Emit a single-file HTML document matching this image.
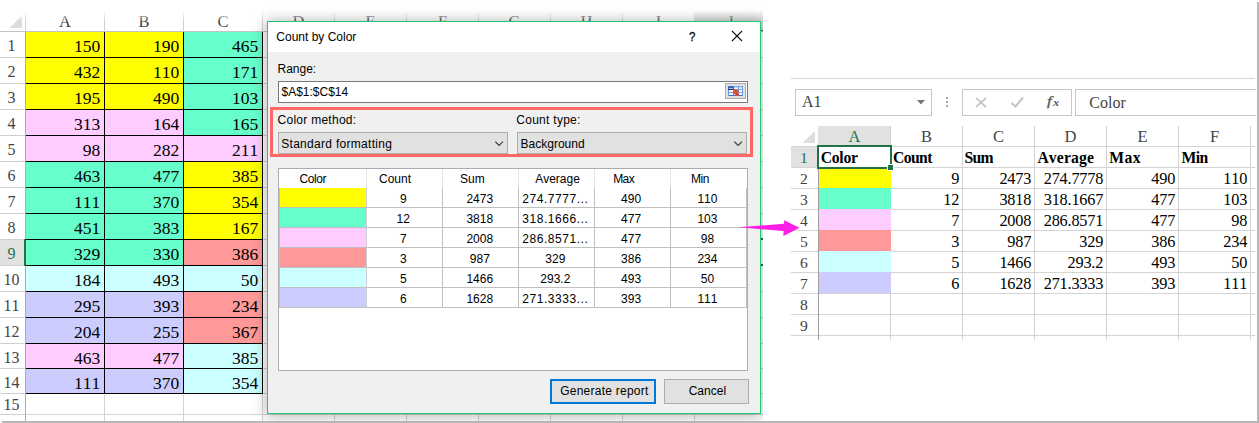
<!DOCTYPE html>
<html><head><meta charset="utf-8"><title>Count by Color</title>
<style>
html,body{margin:0;padding:0;background:#fff;}
body{width:1259px;height:423px;position:relative;overflow:hidden;}
#root{position:absolute;left:0;top:0;width:1259px;height:423px;overflow:hidden;background:#fff;}
#root div,#root span,#root svg,.abs{position:absolute;}
#root div{box-sizing:content-box;}
.se{font-family:"Liberation Serif",serif;white-space:nowrap;line-height:normal;font-kerning:none;}
.sa{font-family:"Liberation Sans",sans-serif;white-space:nowrap;line-height:normal;font-kerning:none;}
.se span,.sa span,.se i{position:static !important;}
#root .rel{position:relative !important;}
</style></head><body><div id="root">
<div class="abs" style="left:0;top:0;width:763px;height:421px;overflow:hidden">
<div style="left:695px;top:11px;width:68px;height:20px;background:#d7d7d7;"></div>
<div style="left:695px;top:30px;width:68px;height:2px;background:#217346;"></div>
<div style="left:25px;top:11px;width:1px;height:20px;background:#d0d0d0;"></div>
<div style="left:104px;top:11px;width:1px;height:20px;background:#d0d0d0;"></div>
<div style="left:183px;top:11px;width:1px;height:20px;background:#d0d0d0;"></div>
<div style="left:262px;top:11px;width:1px;height:20px;background:#d0d0d0;"></div>
<div style="left:334px;top:11px;width:1px;height:20px;background:#d0d0d0;"></div>
<div style="left:406px;top:11px;width:1px;height:20px;background:#d0d0d0;"></div>
<div style="left:478px;top:11px;width:1px;height:20px;background:#d0d0d0;"></div>
<div style="left:550px;top:11px;width:1px;height:20px;background:#d0d0d0;"></div>
<div style="left:622px;top:11px;width:1px;height:20px;background:#d0d0d0;"></div>
<div style="left:694px;top:11px;width:1px;height:20px;background:#d0d0d0;"></div>
<div style="left:0px;top:31px;width:763px;height:1px;background:#c4c4c4;"></div>
<div style="left:0px;top:57px;width:25px;height:1px;background:#d0d0d0;"></div>
<div style="left:0px;top:83px;width:25px;height:1px;background:#d0d0d0;"></div>
<div style="left:0px;top:109px;width:25px;height:1px;background:#d0d0d0;"></div>
<div style="left:0px;top:135px;width:25px;height:1px;background:#d0d0d0;"></div>
<div style="left:0px;top:161px;width:25px;height:1px;background:#d0d0d0;"></div>
<div style="left:0px;top:187px;width:25px;height:1px;background:#d0d0d0;"></div>
<div style="left:0px;top:213px;width:25px;height:1px;background:#d0d0d0;"></div>
<div style="left:0px;top:239px;width:25px;height:1px;background:#d0d0d0;"></div>
<div style="left:0px;top:265px;width:25px;height:1px;background:#d0d0d0;"></div>
<div style="left:0px;top:291px;width:25px;height:1px;background:#d0d0d0;"></div>
<div style="left:0px;top:317px;width:25px;height:1px;background:#d0d0d0;"></div>
<div style="left:0px;top:343px;width:25px;height:1px;background:#d0d0d0;"></div>
<div style="left:0px;top:368px;width:25px;height:1px;background:#d0d0d0;"></div>
<div style="left:0px;top:393px;width:25px;height:1px;background:#d0d0d0;"></div>
<div style="left:0px;top:414px;width:25px;height:1px;background:#d0d0d0;"></div>
<div style="left:25px;top:32px;width:1px;height:389px;background:#ababab;"></div>
<div style="left:26px;top:57px;width:737px;height:1px;background:#d4d4d4;"></div>
<div style="left:26px;top:83px;width:737px;height:1px;background:#d4d4d4;"></div>
<div style="left:26px;top:109px;width:737px;height:1px;background:#d4d4d4;"></div>
<div style="left:26px;top:135px;width:737px;height:1px;background:#d4d4d4;"></div>
<div style="left:26px;top:161px;width:737px;height:1px;background:#d4d4d4;"></div>
<div style="left:26px;top:187px;width:737px;height:1px;background:#d4d4d4;"></div>
<div style="left:26px;top:213px;width:737px;height:1px;background:#d4d4d4;"></div>
<div style="left:26px;top:239px;width:737px;height:1px;background:#d4d4d4;"></div>
<div style="left:26px;top:265px;width:737px;height:1px;background:#d4d4d4;"></div>
<div style="left:26px;top:291px;width:737px;height:1px;background:#d4d4d4;"></div>
<div style="left:26px;top:317px;width:737px;height:1px;background:#d4d4d4;"></div>
<div style="left:26px;top:343px;width:737px;height:1px;background:#d4d4d4;"></div>
<div style="left:26px;top:368px;width:737px;height:1px;background:#d4d4d4;"></div>
<div style="left:26px;top:393px;width:737px;height:1px;background:#d4d4d4;"></div>
<div style="left:26px;top:414px;width:737px;height:1px;background:#d4d4d4;"></div>
<div style="left:104px;top:32px;width:1px;height:389px;background:#d4d4d4;"></div>
<div style="left:183px;top:32px;width:1px;height:389px;background:#d4d4d4;"></div>
<div style="left:262px;top:32px;width:1px;height:389px;background:#d4d4d4;"></div>
<div style="left:334px;top:32px;width:1px;height:389px;background:#d4d4d4;"></div>
<div style="left:406px;top:32px;width:1px;height:389px;background:#d4d4d4;"></div>
<div style="left:478px;top:32px;width:1px;height:389px;background:#d4d4d4;"></div>
<div style="left:550px;top:32px;width:1px;height:389px;background:#d4d4d4;"></div>
<div style="left:622px;top:32px;width:1px;height:389px;background:#d4d4d4;"></div>
<div style="left:694px;top:32px;width:1px;height:389px;background:#d4d4d4;"></div>
<svg class="abs" style="left:9px;top:15px" width="14" height="14"><polygon points="13,0.5 13,13 0.5,13" fill="#dcdcdc"/></svg>
<div style="left:0px;top:240px;width:24px;height:25px;background:#e1e1e1;"></div>
<div style="left:24px;top:239px;width:2px;height:27px;background:#217346;"></div>
<span class="se" style="top:11.90px;font-size:16.5px;color:#444;left:-35.0px;width:200px;text-align:center;">A</span>
<span class="se" style="top:11.90px;font-size:16.5px;color:#444;left:44.0px;width:200px;text-align:center;">B</span>
<span class="se" style="top:11.90px;font-size:16.5px;color:#444;left:123.0px;width:200px;text-align:center;">C</span>
<span class="se" style="top:11.90px;font-size:16.5px;color:#444;left:198.5px;width:200px;text-align:center;">D</span>
<span class="se" style="top:11.90px;font-size:16.5px;color:#444;left:270.5px;width:200px;text-align:center;">E</span>
<span class="se" style="top:11.90px;font-size:16.5px;color:#444;left:342.5px;width:200px;text-align:center;">F</span>
<span class="se" style="top:11.90px;font-size:16.5px;color:#444;left:414.5px;width:200px;text-align:center;">G</span>
<span class="se" style="top:11.90px;font-size:16.5px;color:#444;left:486.5px;width:200px;text-align:center;">H</span>
<span class="se" style="top:11.90px;font-size:16.5px;color:#444;left:558.5px;width:200px;text-align:center;">I</span>
<span class="se" style="top:11.90px;font-size:16.5px;color:#217346;left:630.5px;width:200px;text-align:center;">J</span>
<span class="se" style="top:37.44px;font-size:16px;color:#444;left:-88.5px;width:200px;text-align:center;">1</span>
<span class="se" style="top:63.44px;font-size:16px;color:#444;left:-88.5px;width:200px;text-align:center;">2</span>
<span class="se" style="top:89.44px;font-size:16px;color:#444;left:-88.5px;width:200px;text-align:center;">3</span>
<span class="se" style="top:115.44px;font-size:16px;color:#444;left:-88.5px;width:200px;text-align:center;">4</span>
<span class="se" style="top:141.44px;font-size:16px;color:#444;left:-88.5px;width:200px;text-align:center;">5</span>
<span class="se" style="top:167.44px;font-size:16px;color:#444;left:-88.5px;width:200px;text-align:center;">6</span>
<span class="se" style="top:193.44px;font-size:16px;color:#444;left:-88.5px;width:200px;text-align:center;">7</span>
<span class="se" style="top:219.44px;font-size:16px;color:#444;left:-88.5px;width:200px;text-align:center;">8</span>
<span class="se" style="top:245.44px;font-size:16px;color:#217346;left:-88.5px;width:200px;text-align:center;">9</span>
<span class="se" style="top:271.44px;font-size:16px;color:#444;left:-88.5px;width:200px;text-align:center;">10</span>
<span class="se" style="top:297.44px;font-size:16px;color:#444;left:-88.5px;width:200px;text-align:center;">11</span>
<span class="se" style="top:323.44px;font-size:16px;color:#444;left:-88.5px;width:200px;text-align:center;">12</span>
<span class="se" style="top:349.44px;font-size:16px;color:#444;left:-88.5px;width:200px;text-align:center;">13</span>
<span class="se" style="top:374.44px;font-size:16px;color:#444;left:-88.5px;width:200px;text-align:center;">14</span>
<span class="se" style="top:395.74px;font-size:16px;color:#444;left:-88.5px;width:200px;text-align:center;">15</span>
<div style="left:26px;top:32px;width:78px;height:25px;background:#ffff00;"></div>
<span class="se" style="top:36.11px;font-size:17.5px;color:#000;left:-99.8px;width:200px;text-align:right;">150</span>
<div style="left:105px;top:32px;width:78px;height:25px;background:#ffff00;"></div>
<span class="se" style="top:36.11px;font-size:17.5px;color:#000;left:-20.80000000000001px;width:200px;text-align:right;">190</span>
<div style="left:184px;top:32px;width:78px;height:25px;background:#66ffcc;"></div>
<span class="se" style="top:36.11px;font-size:17.5px;color:#000;left:58.19999999999999px;width:200px;text-align:right;">465</span>
<div style="left:26px;top:58px;width:78px;height:25px;background:#ffff00;"></div>
<span class="se" style="top:62.11px;font-size:17.5px;color:#000;left:-99.8px;width:200px;text-align:right;">432</span>
<div style="left:105px;top:58px;width:78px;height:25px;background:#ffff00;"></div>
<span class="se" style="top:62.11px;font-size:17.5px;color:#000;left:-20.80000000000001px;width:200px;text-align:right;">110</span>
<div style="left:184px;top:58px;width:78px;height:25px;background:#66ffcc;"></div>
<span class="se" style="top:62.11px;font-size:17.5px;color:#000;left:58.19999999999999px;width:200px;text-align:right;">171</span>
<div style="left:26px;top:84px;width:78px;height:25px;background:#ffff00;"></div>
<span class="se" style="top:88.11px;font-size:17.5px;color:#000;left:-99.8px;width:200px;text-align:right;">195</span>
<div style="left:105px;top:84px;width:78px;height:25px;background:#ffff00;"></div>
<span class="se" style="top:88.11px;font-size:17.5px;color:#000;left:-20.80000000000001px;width:200px;text-align:right;">490</span>
<div style="left:184px;top:84px;width:78px;height:25px;background:#66ffcc;"></div>
<span class="se" style="top:88.11px;font-size:17.5px;color:#000;left:58.19999999999999px;width:200px;text-align:right;">103</span>
<div style="left:26px;top:110px;width:78px;height:25px;background:#ffccff;"></div>
<span class="se" style="top:114.11px;font-size:17.5px;color:#000;left:-99.8px;width:200px;text-align:right;">313</span>
<div style="left:105px;top:110px;width:78px;height:25px;background:#ffccff;"></div>
<span class="se" style="top:114.11px;font-size:17.5px;color:#000;left:-20.80000000000001px;width:200px;text-align:right;">164</span>
<div style="left:184px;top:110px;width:78px;height:25px;background:#66ffcc;"></div>
<span class="se" style="top:114.11px;font-size:17.5px;color:#000;left:58.19999999999999px;width:200px;text-align:right;">165</span>
<div style="left:26px;top:136px;width:78px;height:25px;background:#ffccff;"></div>
<span class="se" style="top:140.11px;font-size:17.5px;color:#000;left:-99.8px;width:200px;text-align:right;">98</span>
<div style="left:105px;top:136px;width:78px;height:25px;background:#ffccff;"></div>
<span class="se" style="top:140.11px;font-size:17.5px;color:#000;left:-20.80000000000001px;width:200px;text-align:right;">282</span>
<div style="left:184px;top:136px;width:78px;height:25px;background:#ffccff;"></div>
<span class="se" style="top:140.11px;font-size:17.5px;color:#000;left:58.19999999999999px;width:200px;text-align:right;">211</span>
<div style="left:26px;top:162px;width:78px;height:25px;background:#66ffcc;"></div>
<span class="se" style="top:166.11px;font-size:17.5px;color:#000;left:-99.8px;width:200px;text-align:right;">463</span>
<div style="left:105px;top:162px;width:78px;height:25px;background:#66ffcc;"></div>
<span class="se" style="top:166.11px;font-size:17.5px;color:#000;left:-20.80000000000001px;width:200px;text-align:right;">477</span>
<div style="left:184px;top:162px;width:78px;height:25px;background:#ffff00;"></div>
<span class="se" style="top:166.11px;font-size:17.5px;color:#000;left:58.19999999999999px;width:200px;text-align:right;">385</span>
<div style="left:26px;top:188px;width:78px;height:25px;background:#66ffcc;"></div>
<span class="se" style="top:192.11px;font-size:17.5px;color:#000;left:-99.8px;width:200px;text-align:right;">111</span>
<div style="left:105px;top:188px;width:78px;height:25px;background:#66ffcc;"></div>
<span class="se" style="top:192.11px;font-size:17.5px;color:#000;left:-20.80000000000001px;width:200px;text-align:right;">370</span>
<div style="left:184px;top:188px;width:78px;height:25px;background:#ffff00;"></div>
<span class="se" style="top:192.11px;font-size:17.5px;color:#000;left:58.19999999999999px;width:200px;text-align:right;">354</span>
<div style="left:26px;top:214px;width:78px;height:25px;background:#66ffcc;"></div>
<span class="se" style="top:218.11px;font-size:17.5px;color:#000;left:-99.8px;width:200px;text-align:right;">451</span>
<div style="left:105px;top:214px;width:78px;height:25px;background:#66ffcc;"></div>
<span class="se" style="top:218.11px;font-size:17.5px;color:#000;left:-20.80000000000001px;width:200px;text-align:right;">383</span>
<div style="left:184px;top:214px;width:78px;height:25px;background:#ffff00;"></div>
<span class="se" style="top:218.11px;font-size:17.5px;color:#000;left:58.19999999999999px;width:200px;text-align:right;">167</span>
<div style="left:26px;top:240px;width:78px;height:25px;background:#66ffcc;"></div>
<span class="se" style="top:244.11px;font-size:17.5px;color:#000;left:-99.8px;width:200px;text-align:right;">329</span>
<div style="left:105px;top:240px;width:78px;height:25px;background:#66ffcc;"></div>
<span class="se" style="top:244.11px;font-size:17.5px;color:#000;left:-20.80000000000001px;width:200px;text-align:right;">330</span>
<div style="left:184px;top:240px;width:78px;height:25px;background:#ff9999;"></div>
<span class="se" style="top:244.11px;font-size:17.5px;color:#000;left:58.19999999999999px;width:200px;text-align:right;">386</span>
<div style="left:26px;top:266px;width:78px;height:25px;background:#ccffff;"></div>
<span class="se" style="top:270.11px;font-size:17.5px;color:#000;left:-99.8px;width:200px;text-align:right;">184</span>
<div style="left:105px;top:266px;width:78px;height:25px;background:#ccffff;"></div>
<span class="se" style="top:270.11px;font-size:17.5px;color:#000;left:-20.80000000000001px;width:200px;text-align:right;">493</span>
<div style="left:184px;top:266px;width:78px;height:25px;background:#ccffff;"></div>
<span class="se" style="top:270.11px;font-size:17.5px;color:#000;left:58.19999999999999px;width:200px;text-align:right;">50</span>
<div style="left:26px;top:292px;width:78px;height:25px;background:#ccccff;"></div>
<span class="se" style="top:296.11px;font-size:17.5px;color:#000;left:-99.8px;width:200px;text-align:right;">295</span>
<div style="left:105px;top:292px;width:78px;height:25px;background:#ccccff;"></div>
<span class="se" style="top:296.11px;font-size:17.5px;color:#000;left:-20.80000000000001px;width:200px;text-align:right;">393</span>
<div style="left:184px;top:292px;width:78px;height:25px;background:#ff9999;"></div>
<span class="se" style="top:296.11px;font-size:17.5px;color:#000;left:58.19999999999999px;width:200px;text-align:right;">234</span>
<div style="left:26px;top:318px;width:78px;height:25px;background:#ccccff;"></div>
<span class="se" style="top:322.11px;font-size:17.5px;color:#000;left:-99.8px;width:200px;text-align:right;">204</span>
<div style="left:105px;top:318px;width:78px;height:25px;background:#ccccff;"></div>
<span class="se" style="top:322.11px;font-size:17.5px;color:#000;left:-20.80000000000001px;width:200px;text-align:right;">255</span>
<div style="left:184px;top:318px;width:78px;height:25px;background:#ff9999;"></div>
<span class="se" style="top:322.11px;font-size:17.5px;color:#000;left:58.19999999999999px;width:200px;text-align:right;">367</span>
<div style="left:26px;top:344px;width:78px;height:24px;background:#ffccff;"></div>
<span class="se" style="top:348.11px;font-size:17.5px;color:#000;left:-99.8px;width:200px;text-align:right;">463</span>
<div style="left:105px;top:344px;width:78px;height:24px;background:#ffccff;"></div>
<span class="se" style="top:348.11px;font-size:17.5px;color:#000;left:-20.80000000000001px;width:200px;text-align:right;">477</span>
<div style="left:184px;top:344px;width:78px;height:24px;background:#ccffff;"></div>
<span class="se" style="top:348.11px;font-size:17.5px;color:#000;left:58.19999999999999px;width:200px;text-align:right;">385</span>
<div style="left:26px;top:369px;width:78px;height:24px;background:#ccccff;"></div>
<span class="se" style="top:373.11px;font-size:17.5px;color:#000;left:-99.8px;width:200px;text-align:right;">111</span>
<div style="left:105px;top:369px;width:78px;height:24px;background:#ccccff;"></div>
<span class="se" style="top:373.11px;font-size:17.5px;color:#000;left:-20.80000000000001px;width:200px;text-align:right;">370</span>
<div style="left:184px;top:369px;width:78px;height:24px;background:#ccffff;"></div>
<span class="se" style="top:373.11px;font-size:17.5px;color:#000;left:58.19999999999999px;width:200px;text-align:right;">354</span>
<div style="left:26px;top:57px;width:237px;height:1px;background:#000;"></div>
<div style="left:26px;top:83px;width:237px;height:1px;background:#000;"></div>
<div style="left:26px;top:109px;width:237px;height:1px;background:#000;"></div>
<div style="left:26px;top:135px;width:237px;height:1px;background:#000;"></div>
<div style="left:26px;top:161px;width:237px;height:1px;background:#000;"></div>
<div style="left:26px;top:187px;width:237px;height:1px;background:#000;"></div>
<div style="left:26px;top:213px;width:237px;height:1px;background:#000;"></div>
<div style="left:26px;top:239px;width:237px;height:1px;background:#000;"></div>
<div style="left:26px;top:265px;width:237px;height:1px;background:#000;"></div>
<div style="left:26px;top:291px;width:237px;height:1px;background:#000;"></div>
<div style="left:26px;top:317px;width:237px;height:1px;background:#000;"></div>
<div style="left:26px;top:343px;width:237px;height:1px;background:#000;"></div>
<div style="left:26px;top:368px;width:237px;height:1px;background:#000;"></div>
<div style="left:26px;top:393px;width:237px;height:1px;background:#000;"></div>
<div style="left:104px;top:32px;width:1px;height:362px;background:#000;"></div>
<div style="left:183px;top:32px;width:1px;height:362px;background:#000;"></div>
<div style="left:262px;top:32px;width:1px;height:362px;background:#000;"></div>
<div class="abs" style="left:694px;top:238px;width:69px;height:24px;border:2px solid #217346"></div>
<div class="abs" style="left:0;top:0;width:763px;height:22px;background:linear-gradient(to bottom,#fff 0,#fff 45%,rgba(255,255,255,0) 100%)"></div>
<div class="abs" style="left:267px;top:21px;width:492px;height:391px;border:1px solid #1dc971;background:#f0f0f0;box-shadow:0 1px 13px 1px rgba(0,0,0,.30)"></div>
<div style="left:268px;top:22px;width:492px;height:30px;background:#fff;"></div>
<span class="sa" style="top:30.14px;font-size:12px;color:#000;left:276.3px;">Count by Color</span>
<span class="sa" style="top:28.78px;font-size:13.5px;color:#111;left:688.8px;transform:scaleX(.85);transform-origin:0 0;-webkit-text-stroke:.35px #111;">?</span>
<svg class="abs" style="left:731px;top:30px" width="12" height="12"><path d="M1 1 L11 11 M11 1 L1 11" stroke="#111" stroke-width="1.1" fill="none"/></svg>
<span class="sa" style="top:62.14px;font-size:12px;color:#000;left:277.5px;">Range:</span>
<div class="abs" style="left:278px;top:81px;width:468px;height:20px;border:1px solid #7a7a7a;background:#fff"></div>
<span class="sa" style="top:85.44px;font-size:12px;color:#000;left:281.5px;">$A$1:$C$14</span>
<div class="abs" style="left:725px;top:83px;width:19px;height:14px;border:1px solid #adadad;background:#e1e1e1"></div>
<svg class="abs" style="left:728px;top:86px" width="15" height="10" viewBox="0 0 15 10">
<defs><linearGradient id="pk" x1="0" y1="0" x2="0" y2="1"><stop offset="0" stop-color="#3f83e4"/><stop offset="1" stop-color="#1a2a66"/></linearGradient></defs>
<rect x="0" y="0" width="15" height="10" fill="#f4f8ff"/>
<rect x="6" y="0" width="9" height="1.4" fill="#86aee8"/>
<rect x="0" y="0" width="6" height="4" fill="url(#pk)"/>
<rect x="0.6" y="2.2" width="4.4" height="0.8" fill="#c9d6ee"/>
<path d="M6 3.5 H15 M0 6.5 H15" stroke="#7ea6e2" stroke-width="1" fill="none"/>
<path d="M0 9.5 H15" stroke="#3f6fca" stroke-width="1" fill="none"/>
<path d="M0.5 4 V10 M10.5 0 V10 M14.5 0 V10" stroke="#6f9adc" stroke-width="1" fill="none"/>
<path d="M5 2.8 L5 9 L6.9 7.9 L9.2 10.4 L11.6 8.6 L9.3 6.4 L10.6 4.2 Z" fill="#e4461b"/>
<path d="M6.2 4.6 L6.2 6.4" stroke="#f7a58c" stroke-width="0.8"/>
</svg>
<div class="abs" style="left:270px;top:107px;width:477px;height:44px;border:3px solid #ff6666"></div>
<span class="sa" style="top:113.14px;font-size:12px;color:#000;left:277.5px;letter-spacing:.27px;">Color method:</span>
<span class="sa" style="top:113.14px;font-size:12px;color:#000;left:516.3px;letter-spacing:.27px;">Count type:</span>
<div class="abs" style="left:278px;top:132px;width:228px;height:20px;border:1px solid #adadad;background:#e1e1e1"></div>
<span class="sa" style="top:136.74px;font-size:12px;color:#000;left:281.2px;letter-spacing:0.3px;">Standard formatting</span>
<svg class="abs" style="left:494.7px;top:141px" width="9" height="6"><path d="M0.3 0.6 L4.15 4.4 L8 0.6" stroke="#404040" stroke-width="1.25" fill="none"/></svg>
<div class="abs" style="left:517px;top:132px;width:228px;height:20px;border:1px solid #adadad;background:#e1e1e1"></div>
<span class="sa" style="top:136.74px;font-size:12px;color:#000;left:520.6px;letter-spacing:0px;">Background</span>
<svg class="abs" style="left:733.7px;top:141px" width="9" height="6"><path d="M0.3 0.6 L4.15 4.4 L8 0.6" stroke="#404040" stroke-width="1.25" fill="none"/></svg>
<div class="abs" style="left:278px;top:168px;width:468px;height:201px;border:1px solid #abadb3;background:#fff"></div>
<div style="left:366px;top:169px;width:1px;height:19px;background:#e5e5e5;"></div>
<div style="left:442px;top:169px;width:1px;height:19px;background:#e5e5e5;"></div>
<div style="left:518px;top:169px;width:1px;height:19px;background:#e5e5e5;"></div>
<div style="left:594px;top:169px;width:1px;height:19px;background:#e5e5e5;"></div>
<div style="left:670px;top:169px;width:1px;height:19px;background:#e5e5e5;"></div>
<div style="left:279px;top:188px;width:1px;height:19px;background:#c0c0c0;"></div>
<div style="left:280px;top:188px;width:86px;height:19px;background:#ffff00;"></div>
<div style="left:279px;top:207px;width:468px;height:1px;background:#c0c0c0;"></div>
<div style="left:279px;top:208px;width:1px;height:19px;background:#c0c0c0;"></div>
<div style="left:280px;top:208px;width:86px;height:19px;background:#66ffcc;"></div>
<div style="left:279px;top:227px;width:468px;height:1px;background:#c0c0c0;"></div>
<div style="left:279px;top:228px;width:1px;height:19px;background:#c0c0c0;"></div>
<div style="left:280px;top:228px;width:86px;height:19px;background:#ffccff;"></div>
<div style="left:279px;top:247px;width:468px;height:1px;background:#c0c0c0;"></div>
<div style="left:279px;top:248px;width:1px;height:19px;background:#c0c0c0;"></div>
<div style="left:280px;top:248px;width:86px;height:19px;background:#ff9999;"></div>
<div style="left:279px;top:267px;width:468px;height:1px;background:#c0c0c0;"></div>
<div style="left:279px;top:268px;width:1px;height:19px;background:#c0c0c0;"></div>
<div style="left:280px;top:268px;width:86px;height:19px;background:#ccffff;"></div>
<div style="left:279px;top:287px;width:468px;height:1px;background:#c0c0c0;"></div>
<div style="left:279px;top:288px;width:1px;height:19px;background:#c0c0c0;"></div>
<div style="left:280px;top:288px;width:86px;height:19px;background:#ccccff;"></div>
<div style="left:279px;top:307px;width:468px;height:1px;background:#c0c0c0;"></div>
<div style="left:366px;top:188px;width:1px;height:120px;background:#cdcdd6;"></div>
<div style="left:442px;top:188px;width:1px;height:120px;background:#c0c0c0;"></div>
<div style="left:518px;top:188px;width:1px;height:120px;background:#c0c0c0;"></div>
<div style="left:594px;top:188px;width:1px;height:120px;background:#c0c0c0;"></div>
<div style="left:670px;top:188px;width:1px;height:120px;background:#c0c0c0;"></div>
<div style="left:746px;top:188px;width:1px;height:120px;background:#c0c0c0;"></div>
<span class="sa" style="top:171.74px;font-size:12px;color:#000;left:299.6px;letter-spacing:-0.45px;">Color</span>
<span class="sa" style="top:171.74px;font-size:12px;color:#000;left:379px;letter-spacing:0px;">Count</span>
<span class="sa" style="top:171.74px;font-size:12px;color:#000;left:460px;letter-spacing:0px;">Sum</span>
<span class="sa" style="top:171.74px;font-size:12px;color:#000;left:535.2px;letter-spacing:0px;">Average</span>
<span class="sa" style="top:171.74px;font-size:12px;color:#000;left:613.2px;letter-spacing:-0.6px;">Max</span>
<span class="sa" style="top:171.74px;font-size:12px;color:#000;left:691px;letter-spacing:-0.5px;">Min</span>
<span class="sa" style="top:191.74px;font-size:12px;color:#000;left:303.3px;width:200px;text-align:center;">9</span>
<span class="sa" style="top:191.74px;font-size:12px;color:#000;left:379.8px;width:200px;text-align:center;">2473</span>
<span class="sa" style="top:191.74px;font-size:12px;color:#000;left:455.29999999999995px;width:200px;text-align:center;letter-spacing:.55px;">274.7777...</span>
<span class="sa" style="top:191.74px;font-size:12px;color:#000;left:531.1px;width:200px;text-align:center;">490</span>
<span class="sa" style="top:191.74px;font-size:12px;color:#000;left:607.4px;width:200px;text-align:center;">110</span>
<span class="sa" style="top:211.74px;font-size:12px;color:#000;left:303.3px;width:200px;text-align:center;">12</span>
<span class="sa" style="top:211.74px;font-size:12px;color:#000;left:379.8px;width:200px;text-align:center;">3818</span>
<span class="sa" style="top:211.74px;font-size:12px;color:#000;left:455.29999999999995px;width:200px;text-align:center;letter-spacing:.55px;">318.1666...</span>
<span class="sa" style="top:211.74px;font-size:12px;color:#000;left:531.1px;width:200px;text-align:center;">477</span>
<span class="sa" style="top:211.74px;font-size:12px;color:#000;left:607.4px;width:200px;text-align:center;">103</span>
<span class="sa" style="top:231.74px;font-size:12px;color:#000;left:303.3px;width:200px;text-align:center;">7</span>
<span class="sa" style="top:231.74px;font-size:12px;color:#000;left:379.8px;width:200px;text-align:center;">2008</span>
<span class="sa" style="top:231.74px;font-size:12px;color:#000;left:455.29999999999995px;width:200px;text-align:center;letter-spacing:.55px;">286.8571...</span>
<span class="sa" style="top:231.74px;font-size:12px;color:#000;left:531.1px;width:200px;text-align:center;">477</span>
<span class="sa" style="top:231.74px;font-size:12px;color:#000;left:607.4px;width:200px;text-align:center;">98</span>
<span class="sa" style="top:251.74px;font-size:12px;color:#000;left:303.3px;width:200px;text-align:center;">3</span>
<span class="sa" style="top:251.74px;font-size:12px;color:#000;left:379.8px;width:200px;text-align:center;">987</span>
<span class="sa" style="top:251.74px;font-size:12px;color:#000;left:455.29999999999995px;width:200px;text-align:center;">329</span>
<span class="sa" style="top:251.74px;font-size:12px;color:#000;left:531.1px;width:200px;text-align:center;">386</span>
<span class="sa" style="top:251.74px;font-size:12px;color:#000;left:607.4px;width:200px;text-align:center;">234</span>
<span class="sa" style="top:271.74px;font-size:12px;color:#000;left:303.3px;width:200px;text-align:center;">5</span>
<span class="sa" style="top:271.74px;font-size:12px;color:#000;left:379.8px;width:200px;text-align:center;">1466</span>
<span class="sa" style="top:271.74px;font-size:12px;color:#000;left:455.29999999999995px;width:200px;text-align:center;">293.2</span>
<span class="sa" style="top:271.74px;font-size:12px;color:#000;left:531.1px;width:200px;text-align:center;">493</span>
<span class="sa" style="top:271.74px;font-size:12px;color:#000;left:607.4px;width:200px;text-align:center;">50</span>
<span class="sa" style="top:291.74px;font-size:12px;color:#000;left:303.3px;width:200px;text-align:center;">6</span>
<span class="sa" style="top:291.74px;font-size:12px;color:#000;left:379.8px;width:200px;text-align:center;">1628</span>
<span class="sa" style="top:291.74px;font-size:12px;color:#000;left:455.29999999999995px;width:200px;text-align:center;letter-spacing:.55px;">271.3333...</span>
<span class="sa" style="top:291.74px;font-size:12px;color:#000;left:531.1px;width:200px;text-align:center;">393</span>
<span class="sa" style="top:291.74px;font-size:12px;color:#000;left:607.4px;width:200px;text-align:center;">111</span>
<div class="abs" style="left:550px;top:379px;width:102px;height:21px;border:2px solid #0078d7;background:#e1e1e1"></div>
<span class="sa" style="top:383.94px;font-size:12px;color:#000;left:504.4px;width:200px;text-align:center;letter-spacing:.25px;">Generate report</span>
<div class="abs" style="left:664px;top:379px;width:83px;height:23px;border:1px solid #adadad;background:#e1e1e1"></div>
<span class="sa" style="top:383.94px;font-size:12px;color:#000;left:607.4px;width:200px;text-align:center;">Cancel</span>
</div>
<div style="left:791px;top:78px;width:464px;height:1px;background:#d6d6d6;"></div>
<div class="abs" style="left:795px;top:89px;width:135px;height:25px;border:1px solid #c6c6c6;background:#fff"></div>
<span class="se" style="top:92.74px;font-size:16px;color:#444;left:802px;">A1</span>
<svg class="abs" style="left:917px;top:100px" width="8" height="5"><polygon points="0,0 8,0 4,4.5" fill="#777"/></svg>
<div style="left:946px;top:97px;width:2px;height:2px;background:#a6a6a6;"></div>
<div style="left:946px;top:101px;width:2px;height:2px;background:#a6a6a6;"></div>
<div style="left:946px;top:105px;width:2px;height:2px;background:#a6a6a6;"></div>
<div class="abs" style="left:962px;top:89px;width:108px;height:25px;border:1px solid #c6c6c6;background:#fff"></div>
<svg class="abs" style="left:975px;top:97px" width="12" height="11"><path d="M1 1 L11 10 M11 1 L1 10" stroke="#c6c6c6" stroke-width="1.7" fill="none"/></svg>
<svg class="abs" style="left:1010px;top:96px" width="15" height="12"><path d="M1.5 7 L5.5 10.5 L13 1.5" stroke="#c6c6c6" stroke-width="2.2" fill="none"/></svg>
<span class="se" style="top:93.24px;font-size:13.2px;color:#5a5a5a;left:1047.4px;"><i class="rel" style="display:inline-block;transform:scaleX(1.3);transform-origin:0 50%;-webkit-text-stroke:.3px #5a5a5a">f</i><span class="rel" style="display:inline-block;font-size:10px;font-style:italic;font-weight:bold;top:.8px;left:1.6px;transform:scaleX(1.25);transform-origin:0 50%">x</span></span>
<div class="abs" style="left:1075px;top:89px;width:180px;height:25px;border:1px solid #c6c6c6;border-right:none;background:#fff"></div>
<span class="se" style="top:93.54px;font-size:16px;color:#444;left:1089.3px;">Color</span>
<div style="left:818px;top:126px;width:73px;height:20px;background:#e1e1e1;"></div>
<div style="left:791px;top:147px;width:27px;height:20px;background:#e1e1e1;"></div>
<div style="left:890px;top:126px;width:1px;height:20px;background:#d4d4d4;"></div>
<div style="left:962px;top:126px;width:1px;height:20px;background:#d4d4d4;"></div>
<div style="left:1034px;top:126px;width:1px;height:20px;background:#d4d4d4;"></div>
<div style="left:1106px;top:126px;width:1px;height:20px;background:#d4d4d4;"></div>
<div style="left:1178px;top:126px;width:1px;height:20px;background:#d4d4d4;"></div>
<div style="left:1250px;top:126px;width:1px;height:20px;background:#d4d4d4;"></div>
<div style="left:791px;top:146px;width:464px;height:1px;background:#d4d4d4;"></div>
<div style="left:791px;top:167px;width:464px;height:1px;background:#d4d4d4;"></div>
<div style="left:791px;top:188px;width:464px;height:1px;background:#d4d4d4;"></div>
<div style="left:791px;top:209px;width:464px;height:1px;background:#d4d4d4;"></div>
<div style="left:791px;top:230px;width:464px;height:1px;background:#d4d4d4;"></div>
<div style="left:791px;top:251px;width:464px;height:1px;background:#d4d4d4;"></div>
<div style="left:791px;top:272px;width:464px;height:1px;background:#d4d4d4;"></div>
<div style="left:791px;top:293px;width:464px;height:1px;background:#d4d4d4;"></div>
<div style="left:791px;top:314px;width:464px;height:1px;background:#d4d4d4;"></div>
<div style="left:791px;top:335px;width:464px;height:1px;background:#d4d4d4;"></div>
<div style="left:890px;top:147px;width:1px;height:193px;background:#d4d4d4;"></div>
<div style="left:962px;top:147px;width:1px;height:193px;background:#d4d4d4;"></div>
<div style="left:1034px;top:147px;width:1px;height:193px;background:#d4d4d4;"></div>
<div style="left:1106px;top:147px;width:1px;height:193px;background:#d4d4d4;"></div>
<div style="left:1178px;top:147px;width:1px;height:193px;background:#d4d4d4;"></div>
<div style="left:1250px;top:147px;width:1px;height:193px;background:#d4d4d4;"></div>
<div style="left:818px;top:147px;width:1px;height:193px;background:#9e9e9e;"></div>
<svg class="abs" style="left:802px;top:131px" width="14" height="13"><polygon points="13,0 13,12 0.5,12" fill="#dcdcdc"/></svg>
<span class="se" style="top:127.30px;font-size:16.5px;color:#217346;left:754.5px;width:200px;text-align:center;">A</span>
<span class="se" style="top:127.30px;font-size:16.5px;color:#444;left:826.5px;width:200px;text-align:center;">B</span>
<span class="se" style="top:127.30px;font-size:16.5px;color:#444;left:898.5px;width:200px;text-align:center;">C</span>
<span class="se" style="top:127.30px;font-size:16.5px;color:#444;left:970.5px;width:200px;text-align:center;">D</span>
<span class="se" style="top:127.30px;font-size:16.5px;color:#444;left:1042.5px;width:200px;text-align:center;">E</span>
<span class="se" style="top:127.30px;font-size:16.5px;color:#444;left:1114.5px;width:200px;text-align:center;">F</span>
<span class="se" style="top:149.30px;font-size:15.6px;color:#217346;left:703.8px;width:200px;text-align:center;">1</span>
<span class="se" style="top:170.30px;font-size:15.6px;color:#404040;left:703.8px;width:200px;text-align:center;">2</span>
<span class="se" style="top:191.30px;font-size:15.6px;color:#404040;left:703.8px;width:200px;text-align:center;">3</span>
<span class="se" style="top:212.30px;font-size:15.6px;color:#404040;left:703.8px;width:200px;text-align:center;">4</span>
<span class="se" style="top:233.30px;font-size:15.6px;color:#404040;left:703.8px;width:200px;text-align:center;">5</span>
<span class="se" style="top:254.30px;font-size:15.6px;color:#404040;left:703.8px;width:200px;text-align:center;">6</span>
<span class="se" style="top:275.30px;font-size:15.6px;color:#404040;left:703.8px;width:200px;text-align:center;">7</span>
<span class="se" style="top:296.30px;font-size:15.6px;color:#404040;left:703.8px;width:200px;text-align:center;">8</span>
<span class="se" style="top:317.30px;font-size:15.6px;color:#404040;left:703.8px;width:200px;text-align:center;">9</span>
<div style="left:819px;top:168px;width:72px;height:20px;background:#ffff00;"></div>
<div style="left:819px;top:188px;width:72px;height:21px;background:#66ffcc;"></div>
<div style="left:819px;top:209px;width:72px;height:21px;background:#ffccff;"></div>
<div style="left:819px;top:230px;width:72px;height:21px;background:#ff9999;"></div>
<div style="left:819px;top:251px;width:72px;height:21px;background:#ccffff;"></div>
<div style="left:819px;top:272px;width:72px;height:21px;background:#ccccff;"></div>
<div style="left:819px;top:293px;width:72px;height:1px;background:#d4d4d4;"></div>
<span class="se" style="top:148.71px;font-size:15.7px;color:#000;left:820.7px;font-weight:bold;letter-spacing:-0.28px;">Color</span>
<span class="se" style="top:148.71px;font-size:15.7px;color:#000;left:892.9px;font-weight:bold;letter-spacing:-0.58px;">Count</span>
<span class="se" style="top:148.71px;font-size:15.7px;color:#000;left:964.5px;font-weight:bold;letter-spacing:-0.75px;">Sum</span>
<span class="se" style="top:148.71px;font-size:15.7px;color:#000;left:1037.4px;font-weight:bold;letter-spacing:0.15px;">Average</span>
<span class="se" style="top:148.71px;font-size:15.7px;color:#000;left:1109.3px;font-weight:bold;letter-spacing:0.4px;">Max</span>
<span class="se" style="top:148.71px;font-size:15.7px;color:#000;left:1181.4px;font-weight:bold;letter-spacing:-0.5px;">Min</span>
<span class="se" style="top:169.48px;font-size:16.3px;color:#000;left:759.2px;width:200px;text-align:right;letter-spacing:-.2px;">9</span>
<span class="se" style="top:169.48px;font-size:16.3px;color:#000;left:831.2px;width:200px;text-align:right;letter-spacing:-.2px;">2473</span>
<span class="se" style="top:169.48px;font-size:16.3px;color:#000;left:903.2px;width:200px;text-align:right;letter-spacing:-.2px;">274.7778</span>
<span class="se" style="top:169.48px;font-size:16.3px;color:#000;left:975.2px;width:200px;text-align:right;letter-spacing:-.2px;">490</span>
<span class="se" style="top:169.48px;font-size:16.3px;color:#000;left:1047.2px;width:200px;text-align:right;letter-spacing:-.2px;">110</span>
<span class="se" style="top:190.48px;font-size:16.3px;color:#000;left:759.2px;width:200px;text-align:right;letter-spacing:-.2px;">12</span>
<span class="se" style="top:190.48px;font-size:16.3px;color:#000;left:831.2px;width:200px;text-align:right;letter-spacing:-.2px;">3818</span>
<span class="se" style="top:190.48px;font-size:16.3px;color:#000;left:903.2px;width:200px;text-align:right;letter-spacing:-.2px;">318.1667</span>
<span class="se" style="top:190.48px;font-size:16.3px;color:#000;left:975.2px;width:200px;text-align:right;letter-spacing:-.2px;">477</span>
<span class="se" style="top:190.48px;font-size:16.3px;color:#000;left:1047.2px;width:200px;text-align:right;letter-spacing:-.2px;">103</span>
<span class="se" style="top:211.48px;font-size:16.3px;color:#000;left:759.2px;width:200px;text-align:right;letter-spacing:-.2px;">7</span>
<span class="se" style="top:211.48px;font-size:16.3px;color:#000;left:831.2px;width:200px;text-align:right;letter-spacing:-.2px;">2008</span>
<span class="se" style="top:211.48px;font-size:16.3px;color:#000;left:903.2px;width:200px;text-align:right;letter-spacing:-.2px;">286.8571</span>
<span class="se" style="top:211.48px;font-size:16.3px;color:#000;left:975.2px;width:200px;text-align:right;letter-spacing:-.2px;">477</span>
<span class="se" style="top:211.48px;font-size:16.3px;color:#000;left:1047.2px;width:200px;text-align:right;letter-spacing:-.2px;">98</span>
<span class="se" style="top:232.48px;font-size:16.3px;color:#000;left:759.2px;width:200px;text-align:right;letter-spacing:-.2px;">3</span>
<span class="se" style="top:232.48px;font-size:16.3px;color:#000;left:831.2px;width:200px;text-align:right;letter-spacing:-.2px;">987</span>
<span class="se" style="top:232.48px;font-size:16.3px;color:#000;left:903.2px;width:200px;text-align:right;letter-spacing:-.2px;">329</span>
<span class="se" style="top:232.48px;font-size:16.3px;color:#000;left:975.2px;width:200px;text-align:right;letter-spacing:-.2px;">386</span>
<span class="se" style="top:232.48px;font-size:16.3px;color:#000;left:1047.2px;width:200px;text-align:right;letter-spacing:-.2px;">234</span>
<span class="se" style="top:253.48px;font-size:16.3px;color:#000;left:759.2px;width:200px;text-align:right;letter-spacing:-.2px;">5</span>
<span class="se" style="top:253.48px;font-size:16.3px;color:#000;left:831.2px;width:200px;text-align:right;letter-spacing:-.2px;">1466</span>
<span class="se" style="top:253.48px;font-size:16.3px;color:#000;left:903.2px;width:200px;text-align:right;letter-spacing:-.2px;">293.2</span>
<span class="se" style="top:253.48px;font-size:16.3px;color:#000;left:975.2px;width:200px;text-align:right;letter-spacing:-.2px;">493</span>
<span class="se" style="top:253.48px;font-size:16.3px;color:#000;left:1047.2px;width:200px;text-align:right;letter-spacing:-.2px;">50</span>
<span class="se" style="top:274.48px;font-size:16.3px;color:#000;left:759.2px;width:200px;text-align:right;letter-spacing:-.2px;">6</span>
<span class="se" style="top:274.48px;font-size:16.3px;color:#000;left:831.2px;width:200px;text-align:right;letter-spacing:-.2px;">1628</span>
<span class="se" style="top:274.48px;font-size:16.3px;color:#000;left:903.2px;width:200px;text-align:right;letter-spacing:-.2px;">271.3333</span>
<span class="se" style="top:274.48px;font-size:16.3px;color:#000;left:975.2px;width:200px;text-align:right;letter-spacing:-.2px;">393</span>
<span class="se" style="top:274.48px;font-size:16.3px;color:#000;left:1047.2px;width:200px;text-align:right;letter-spacing:-.2px;">111</span>
<div class="abs" style="left:817px;top:145px;width:71px;height:20px;border:2px solid #217346"></div>
<div style="left:887px;top:164px;width:7px;height:7px;background:#fff;"></div>
<div style="left:888px;top:165px;width:5px;height:5px;background:#217346;"></div>
<svg class="abs" style="left:735px;top:215px" width="70" height="26"><polygon points="3.6,12.2 49.1,8.7 49.1,5.2 64.5,12.7 48.4,20.9 48.6,16.1" fill="#ff1ee6"/></svg>
<div style="left:1257px;top:2px;width:2px;height:421px;background:#b7b7b7;"></div>
<div style="left:2px;top:421px;width:1257px;height:2px;background:#b7b7b7;"></div>
</div></body></html>
